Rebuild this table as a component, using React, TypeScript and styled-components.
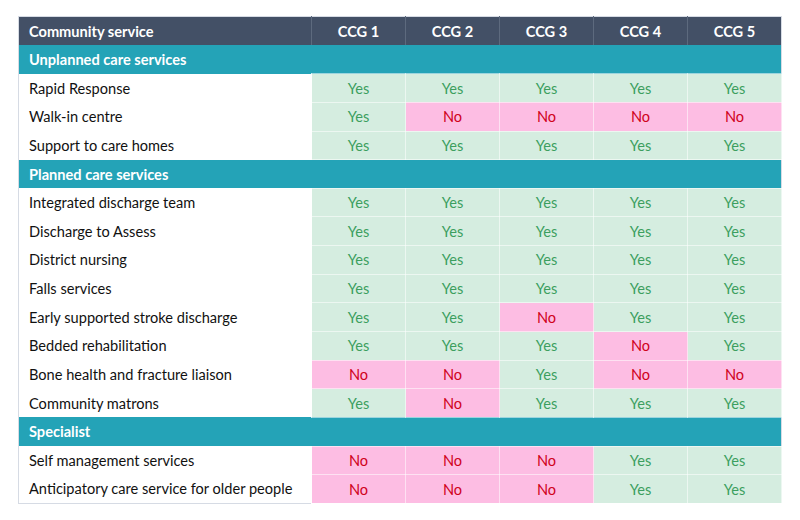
import styled, { createGlobalStyle } from "styled-components";

const GlobalStyle = createGlobalStyle`
   html, body {
      margin: 0;
      padding: 0;
      background: #ffffff;
   }
`

const StyledPage = styled.div`
   padding: 16px 18px;
   font-family: Lato, "Open Sans", sans-serif;
`

const StyledTable = styled.table`
   width: 763px;
   border-collapse: collapse;
   table-layout: fixed;
   border: 1px solid #d6dbe4;
`

const StyledRow = styled.tr`
   height: 28.65px;
`

const StyledHeadCell = styled.th<{ $first?: boolean }>`
   background: #435066;
   color: #ffffff;
   font-size: 14.6px;
   font-weight: 700;
   padding: 0 10px;
   text-align: ${(props) => (props.$first ? "left" : "center")};
   border-left: ${(props) => (props.$first ? "none" : "1px solid #5d6a7e")};
`

const StyledSection = styled.td`
   background: #24a3b7;
   color: #ffffff;
   font-size: 14.6px;
   font-weight: 700;
   padding: 0 10px;
`

const StyledName = styled.td`
   background: #ffffff;
   color: #111111;
   font-size: 14.6px;
   padding: 0 10px;
   white-space: nowrap;
`

const StyledValue = styled.td<{ $yes: boolean }>`
   background: ${(props) => (props.$yes ? "#d5ede0" : "#fdbde3")};
   color: ${(props) => (props.$yes ? "#3c9f5f" : "#d0021b")};
   font-size: 14.6px;
   text-align: center;
   border: 1px solid rgba(255, 255, 255, 0.55);
`

type Group = {
   title: string
   rows: [string, string][]
}

const groups: Group[] = [
   {
      title: "Unplanned care services",
      rows: [
         ["Rapid Response", "YYYYY"],
         ["Walk-in centre", "YNNNN"],
         ["Support to care homes", "YYYYY"],
      ],
   },
   {
      title: "Planned care services",
      rows: [
         ["Integrated discharge team", "YYYYY"],
         ["Discharge to Assess", "YYYYY"],
         ["District nursing", "YYYYY"],
         ["Falls services", "YYYYY"],
         ["Early supported stroke discharge", "YYNYY"],
         ["Bedded rehabilitation", "YYYNY"],
         ["Bone health and fracture liaison", "NNYNN"],
         ["Community matrons", "YNYYY"],
      ],
   },
   {
      title: "Specialist",
      rows: [
         ["Self management services", "NNNYY"],
         ["Anticipatory care service for older people", "NNNYY"],
      ],
   },
]

const ccgs = ["CCG 1", "CCG 2", "CCG 3", "CCG 4", "CCG 5"]

const App = () => {
   return (
      <StyledPage>
         <GlobalStyle />
         <StyledTable>
            <colgroup>
               <col style={{ width: 293 }} />
               {ccgs.map((c) => <col key={c} style={{ width: 94 }} />)}
            </colgroup>
            <thead>
               <StyledRow>
                  <StyledHeadCell $first>Community service</StyledHeadCell>
                  {ccgs.map((c) => <StyledHeadCell key={c}>{c}</StyledHeadCell>)}
               </StyledRow>
            </thead>
            <tbody>
               {groups.map((group) => [
                  <StyledRow key={group.title}>
                     <StyledSection colSpan={6}>{group.title}</StyledSection>
                  </StyledRow>,
                  ...group.rows.map(([name, values]) =>
                     <StyledRow key={name}>
                        <StyledName>{name}</StyledName>
                        {values.split("").map((v, i) =>
                           <StyledValue key={i} $yes={v === "Y"}>{v === "Y" ? "Yes" : "No"}</StyledValue>
                        )}
                     </StyledRow>
                  ),
               ])}
            </tbody>
         </StyledTable>
      </StyledPage>
   )
}

export default App;
